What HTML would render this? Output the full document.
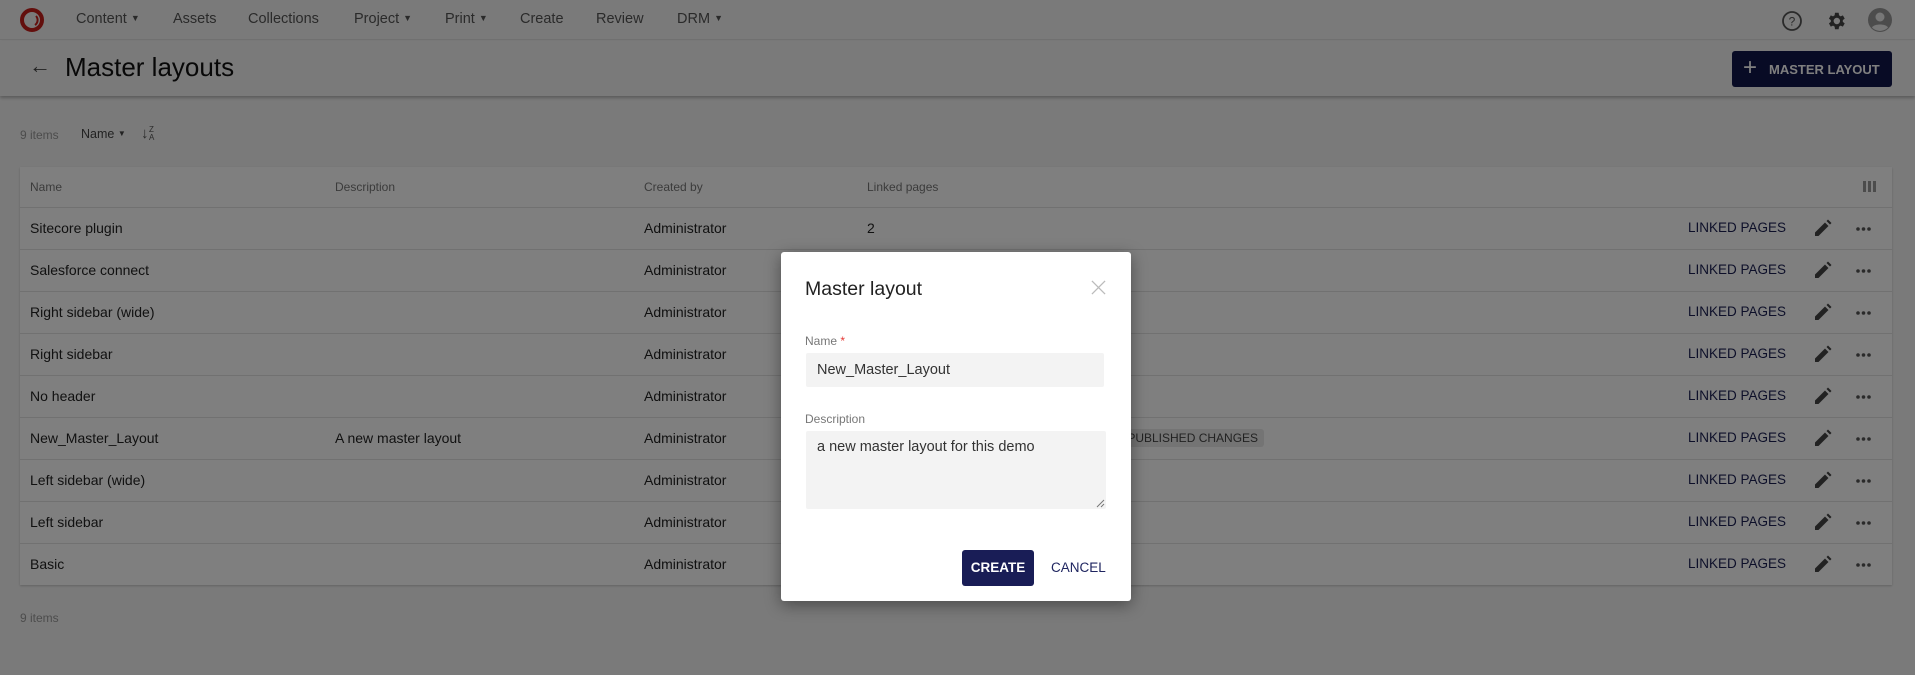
<!DOCTYPE html>
<html><head><meta charset="utf-8"><style>
*{box-sizing:border-box;margin:0;padding:0}
body{width:1915px;height:675px;overflow:hidden;background:#f5f5f5;font-family:"Liberation Sans",sans-serif;position:relative;color:#222}
.abs{position:absolute;white-space:nowrap}
.nav{position:absolute;left:0;top:0;width:1915px;height:40px;background:#f5f5f5;border-bottom:1px solid #e0e0e0}
.nav span{position:absolute;top:11px;font-size:14.5px;color:#555}
.nav small{font-size:9px;vertical-align:2px}
.hdr{position:absolute;left:0;top:41px;width:1915px;height:55px;background:#f5f5f5;box-shadow:0 2px 3px rgba(0,0,0,.25)}
.tbl{position:absolute;left:20px;top:167px;width:1872px;height:418px;background:#fff;box-shadow:0 1px 2px rgba(0,0,0,.2)}
.row{position:absolute;left:0;width:1872px;height:42px;border-top:1px solid #e3e3e3;font-size:14px;color:#222}
.row span{position:absolute;top:12px}
.lp{right:106px;font-size:13.5px;color:#1a1f52}
.ov{position:absolute;left:0;top:0;width:1915px;height:675px;background:rgba(0,0,0,.5)}
.modal{position:absolute;left:781px;top:252px;width:350px;height:349px;background:#fff;border-radius:3px;box-shadow:0 4px 16px rgba(0,0,0,.4)}
.inp{position:absolute;left:25px;width:298px;background:#f3f3f3;border-radius:2px;font-size:14.5px;color:#333;padding-left:11px}
</style></head><body>
<div class="nav">
<svg class="abs" style="left:19px;top:7px" width="26" height="26" viewBox="0 0 26 26"><circle cx="13" cy="13" r="10" fill="none" stroke="#c61f1a" stroke-width="4"/><path d="M17 9 a6 6 0 0 1 -1 9" stroke="#c61f1a" stroke-width="2" fill="none"/></svg>
<span style="left:76px">Content <small>▼</small></span><span style="left:173px">Assets</span><span style="left:248px">Collections</span><span style="left:354px">Project <small>▼</small></span><span style="left:445px">Print <small>▼</small></span><span style="left:520px">Create</span><span style="left:596px">Review</span><span style="left:677px">DRM <small>▼</small></span>
<svg class="abs" style="left:1781px;top:10px" width="22" height="22" viewBox="0 0 22 22"><circle cx="11" cy="11" r="9" fill="none" stroke="#555" stroke-width="1.8"/><text x="11" y="15.5" font-size="12" text-anchor="middle" fill="#555" font-family="Liberation Sans">?</text></svg>
<svg class="abs" style="left:1825px;top:10px" width="22" height="22" viewBox="0 0 24 24"><path fill="#444" d="M19.4 13a7.5 7.5 0 0 0 0-2l2.1-1.6-2-3.5-2.5 1a7 7 0 0 0-1.7-1L14.9 3h-4l-.4 2.9a7 7 0 0 0-1.7 1l-2.5-1-2 3.5L6.4 11a7.5 7.5 0 0 0 0 2l-2.1 1.6 2 3.5 2.5-1a7 7 0 0 0 1.7 1l.4 2.9h4l.4-2.9a7 7 0 0 0 1.7-1l2.5 1 2-3.5zM12.9 15.5a3.5 3.5 0 1 1 0-7 3.5 3.5 0 0 1 0 7z"/></svg>
<svg class="abs" style="left:1868px;top:8px" width="24" height="24" viewBox="0 0 24 24"><circle cx="12" cy="12" r="12" fill="#999"/><circle cx="12" cy="9" r="4.5" fill="#eee"/><path d="M4 19.5c2-4 14-4 16 0a11 11 0 0 1-16 0z" fill="#eee"/></svg>
</div>
<div class="hdr">
<span class="abs" style="left:29px;top:12px;font-size:22px;color:#444">←</span>
<span class="abs" style="left:65px;top:11px;font-size:26px;color:#111">Master layouts</span>
<div class="abs" style="left:1732px;top:10px;width:160px;height:36px;background:#10164a;border-radius:3px;color:#fff;font-size:13px;font-weight:bold"><span style="font-size:24px;font-weight:normal;position:absolute;left:11px;top:3px">+</span><span style="position:absolute;left:37px;top:11px">MASTER LAYOUT</span></div>
</div>
<span class="abs" style="left:20px;top:128px;font-size:12px;color:#999">9 items</span>
<span class="abs" style="left:81px;top:127px;font-size:12.5px;color:#444">Name <small style="font-size:8px;vertical-align:2px">▼</small></span>
<span class="abs" style="left:141px;top:125px;font-size:15px;color:#555">↓<span style="font-size:8px;position:absolute;left:8px;top:1px;line-height:8px">Z<br>A</span></span>
<div class="tbl">
<div class="row" style="top:0;height:40px;border-top:none;font-size:12px;color:#777"><span style="left:10px;top:13px">Name</span><span style="left:315px;top:13px">Description</span><span style="left:624px;top:13px">Created by</span><span style="left:847px;top:13px">Linked pages</span><span style="right:16px;top:14px;width:13px;height:11px;background:repeating-linear-gradient(90deg,#999 0 3px,transparent 3px 5px)"></span></div>
</div>
<div class="abs" style="left:20px;top:207px;width:1872px;height:378px">
<div class="row" style="top:0"><span style="left:10px">Sitecore plugin</span><span style="left:624px">Administrator</span><span style="left:847px">2</span><span class="lp">LINKED PAGES</span></div>
<div class="row" style="top:42px"><span style="left:10px">Salesforce connect</span><span style="left:624px">Administrator</span><span class="lp">LINKED PAGES</span></div>
<div class="row" style="top:84px"><span style="left:10px">Right sidebar (wide)</span><span style="left:624px">Administrator</span><span class="lp">LINKED PAGES</span></div>
<div class="row" style="top:126px"><span style="left:10px">Right sidebar</span><span style="left:624px">Administrator</span><span class="lp">LINKED PAGES</span></div>
<div class="row" style="top:168px"><span style="left:10px">No header</span><span style="left:624px">Administrator</span><span class="lp">LINKED PAGES</span></div>
<div class="row" style="top:210px"><span style="left:10px">New_Master_Layout</span><span style="left:315px">A new master layout</span><span style="left:624px">Administrator</span><span style="left:1084px;top:11px;background:#e8e8e8;border-radius:3px;padding:2px 6px;font-size:12px;color:#444">UNPUBLISHED CHANGES</span><span class="lp">LINKED PAGES</span></div>
<div class="row" style="top:252px"><span style="left:10px">Left sidebar (wide)</span><span style="left:624px">Administrator</span><span class="lp">LINKED PAGES</span></div>
<div class="row" style="top:294px"><span style="left:10px">Left sidebar</span><span style="left:624px">Administrator</span><span class="lp">LINKED PAGES</span></div>
<div class="row" style="top:336px"><span style="left:10px">Basic</span><span style="left:624px">Administrator</span><span class="lp">LINKED PAGES</span></div>
</div>
<svg class="abs" style="left:1812px;top:207px" width="70" height="378" viewBox="0 0 70 378">
<defs><g id="ic"><path d="M3 19 l0-3.5 10-10 3.5 3.5-10 10z M14.5 4 l1.5-1.5 3.5 3.5-1.5 1.5z" fill="#444"/><circle cx="46" cy="12" r="1.8" fill="#555"/><circle cx="51.5" cy="12" r="1.8" fill="#555"/><circle cx="57" cy="12" r="1.8" fill="#555"/></g></defs>
<use href="#ic" y="10"/><use href="#ic" y="52"/><use href="#ic" y="94"/><use href="#ic" y="136"/><use href="#ic" y="178"/><use href="#ic" y="220"/><use href="#ic" y="262"/><use href="#ic" y="304"/><use href="#ic" y="346"/>
</svg>
<span class="abs" style="left:20px;top:611px;font-size:12px;color:#999">9 items</span>
<div class="ov"></div>
<div class="modal">
<span class="abs" style="left:24px;top:26px;font-size:19.5px;color:#222">Master layout</span>
<svg class="abs" style="left:310px;top:28px" width="15" height="15" viewBox="0 0 16 16"><path d="M1 1L15 15M15 1L1 15" stroke="#bbb" stroke-width="1.4"/></svg>
<span class="abs" style="left:24px;top:82px;font-size:12px;color:#777">Name <span style="color:#e53935">*</span></span>
<div class="inp" style="top:101px;height:34px;padding-top:9px">New_Master_Layout</div>
<span class="abs" style="left:24px;top:160px;font-size:12px;color:#777">Description</span>
<div class="inp" style="top:179px;height:78px;width:300px;padding-top:8px">a new master layout for this demo<svg style="position:absolute;right:1px;bottom:1px" width="10" height="10"><path d="M9 2L2 9M9 6L6 9" stroke="#777"/></svg></div>
<div class="abs" style="left:181px;top:298px;width:72px;height:36px;background:#191d56;border-radius:3px;color:#fff;font-weight:bold;font-size:13.5px;text-align:center;line-height:36px">CREATE</div>
<span class="abs" style="left:270px;top:308px;font-size:13.5px;color:#1f2560">CANCEL</span>
</div>
</body></html>
